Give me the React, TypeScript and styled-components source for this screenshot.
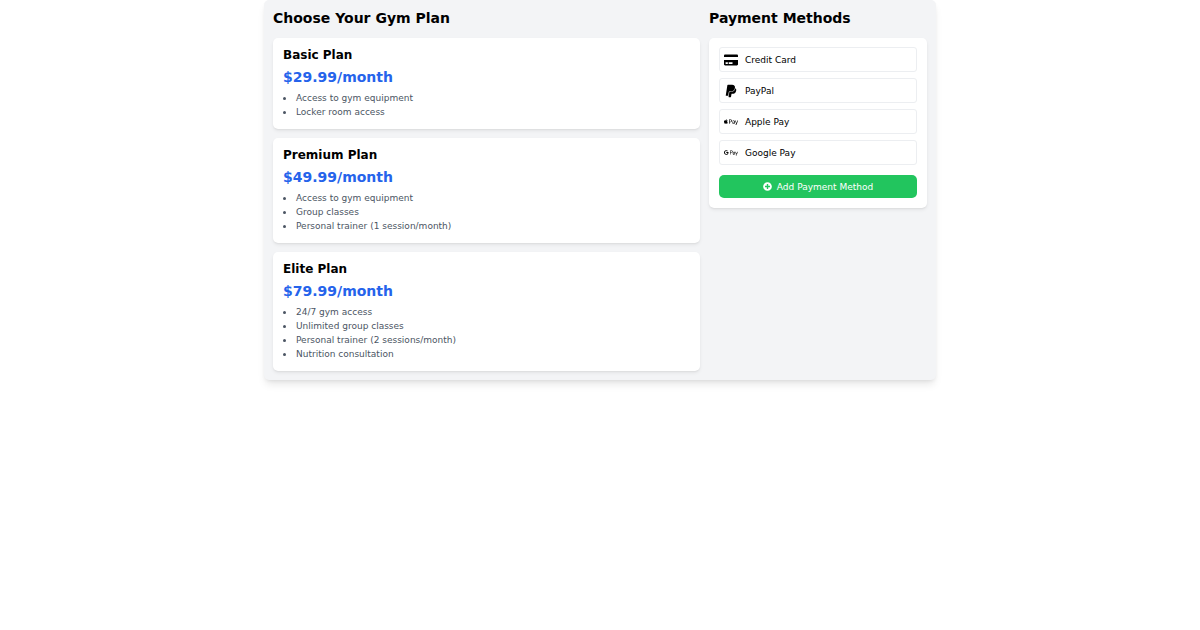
import React from "react";
import styled, { createGlobalStyle } from "styled-components";
import type { IconType } from "react-icons";
import {
  FaApplePay,
  FaCreditCard,
  FaGooglePay,
  FaPaypal,
  FaPlusCircle,
} from "react-icons/fa";

const GlobalStyle = createGlobalStyle`
  *, *::before, *::after { box-sizing: border-box; }
  body {
    margin: 0;
    background: #ffffff;
    color: #000000;
    font-family: "DejaVu Sans", sans-serif;
    font-size: 9px;
    line-height: 14px;
  }
  h2, h3, p, ul { margin: 0; padding: 0; }
`;

const Screen = styled.div`
  min-height: 100vh;
`;

const Page = styled.main`
  display: grid;
  grid-template-columns: 2fr 1fr;
  max-width: 672px;
  margin: 0 auto;
  padding: 9px;
  background: #f3f4f6;
  border-radius: 5px;
  box-shadow: 0 6px 9px -2px rgba(0, 0, 0, 0.1), 0 2px 4px -2px rgba(0, 0, 0, 0.1);

  @media (max-width: 448px) {
    grid-template-columns: 1fr;
    gap: 9px;
  }
`;

const Plans = styled.section`
  padding-right: 9px;

  @media (max-width: 448px) {
    padding-right: 0;
  }
`;

const Payments = styled.section`
  min-width: 0;
`;

const SectionTitle = styled.h2`
  margin-bottom: 10px;
  font-size: 14px;
  line-height: 19px;
  font-weight: 700;
`;

const PlanList = styled.div`
  display: flex;
  flex-direction: column;
  gap: 9px;
`;

const Card = styled.article`
  padding: 9px 10px 10px;
  background: #ffffff;
  border-radius: 5px;
  box-shadow: 0 2px 4px -1px rgba(0, 0, 0, 0.1), 0 1px 2px -1px rgba(0, 0, 0, 0.1);
`;

const PlanName = styled.h3`
  margin-bottom: 5px;
  font-size: 12px;
  line-height: 16px;
  font-weight: 600;
`;

const Price = styled.p`
  margin-bottom: 4px;
  color: #2563eb;
  font-size: 14px;
  line-height: 19px;
  font-weight: 700;
`;

const Features = styled.ul`
  color: #4b5563;
  list-style: disc inside;
`;

const Methods = styled.ul`
  display: flex;
  flex-direction: column;
  gap: 6px;
  margin-bottom: 10px;
  list-style: none;
`;

const Method = styled.li`
  display: flex;
  align-items: center;
  gap: 7px;
  height: 25px;
  padding: 0 4px;
  border: 1px solid #eceef1;
  border-radius: 3px;

  svg {
    flex: none;
  }
`;

const AddButton = styled.button`
  display: flex;
  align-items: center;
  justify-content: center;
  gap: 5px;
  width: 100%;
  height: 23px;
  padding: 0 9px;
  border: 0;
  border-radius: 5px;
  background: #22c55e;
  color: #ffffff;
  font: inherit;
  cursor: pointer;

  &:hover {
    background: #16a34a;
  }
`;

interface Plan {
  name: string;
  price: string;
  features: string[];
}

const plans: Plan[] = [
  {
    name: "Basic Plan",
    price: "$29.99/month",
    features: ["Access to gym equipment", "Locker room access"],
  },
  {
    name: "Premium Plan",
    price: "$49.99/month",
    features: [
      "Access to gym equipment",
      "Group classes",
      "Personal trainer (1 session/month)",
    ],
  },
  {
    name: "Elite Plan",
    price: "$79.99/month",
    features: [
      "24/7 gym access",
      "Unlimited group classes",
      "Personal trainer (2 sessions/month)",
      "Nutrition consultation",
    ],
  },
];

const methods: { label: string; Icon: IconType }[] = [
  { label: "Credit Card", Icon: FaCreditCard },
  { label: "PayPal", Icon: FaPaypal },
  { label: "Apple Pay", Icon: FaApplePay },
  { label: "Google Pay", Icon: FaGooglePay },
];

export default function App() {
  return (
    <Screen>
      <GlobalStyle />
      <Page>
        <Plans>
          <SectionTitle>Choose Your Gym Plan</SectionTitle>
          <PlanList>
            {plans.map((plan) => (
              <Card key={plan.name}>
                <PlanName>{plan.name}</PlanName>
                <Price>{plan.price}</Price>
                <Features>
                  {plan.features.map((feature) => (
                    <li key={feature}>{feature}</li>
                  ))}
                </Features>
              </Card>
            ))}
          </PlanList>
        </Plans>
        <Payments>
          <SectionTitle>Payment Methods</SectionTitle>
          <Card as="div">
            <Methods>
              {methods.map(({ label, Icon }) => (
                <Method key={label}>
                  <Icon size={14} aria-hidden />
                  <span>{label}</span>
                </Method>
              ))}
            </Methods>
            <AddButton type="button">
              <FaPlusCircle size={9} aria-hidden />
              Add Payment Method
            </AddButton>
          </Card>
        </Payments>
      </Page>
    </Screen>
  );
}
